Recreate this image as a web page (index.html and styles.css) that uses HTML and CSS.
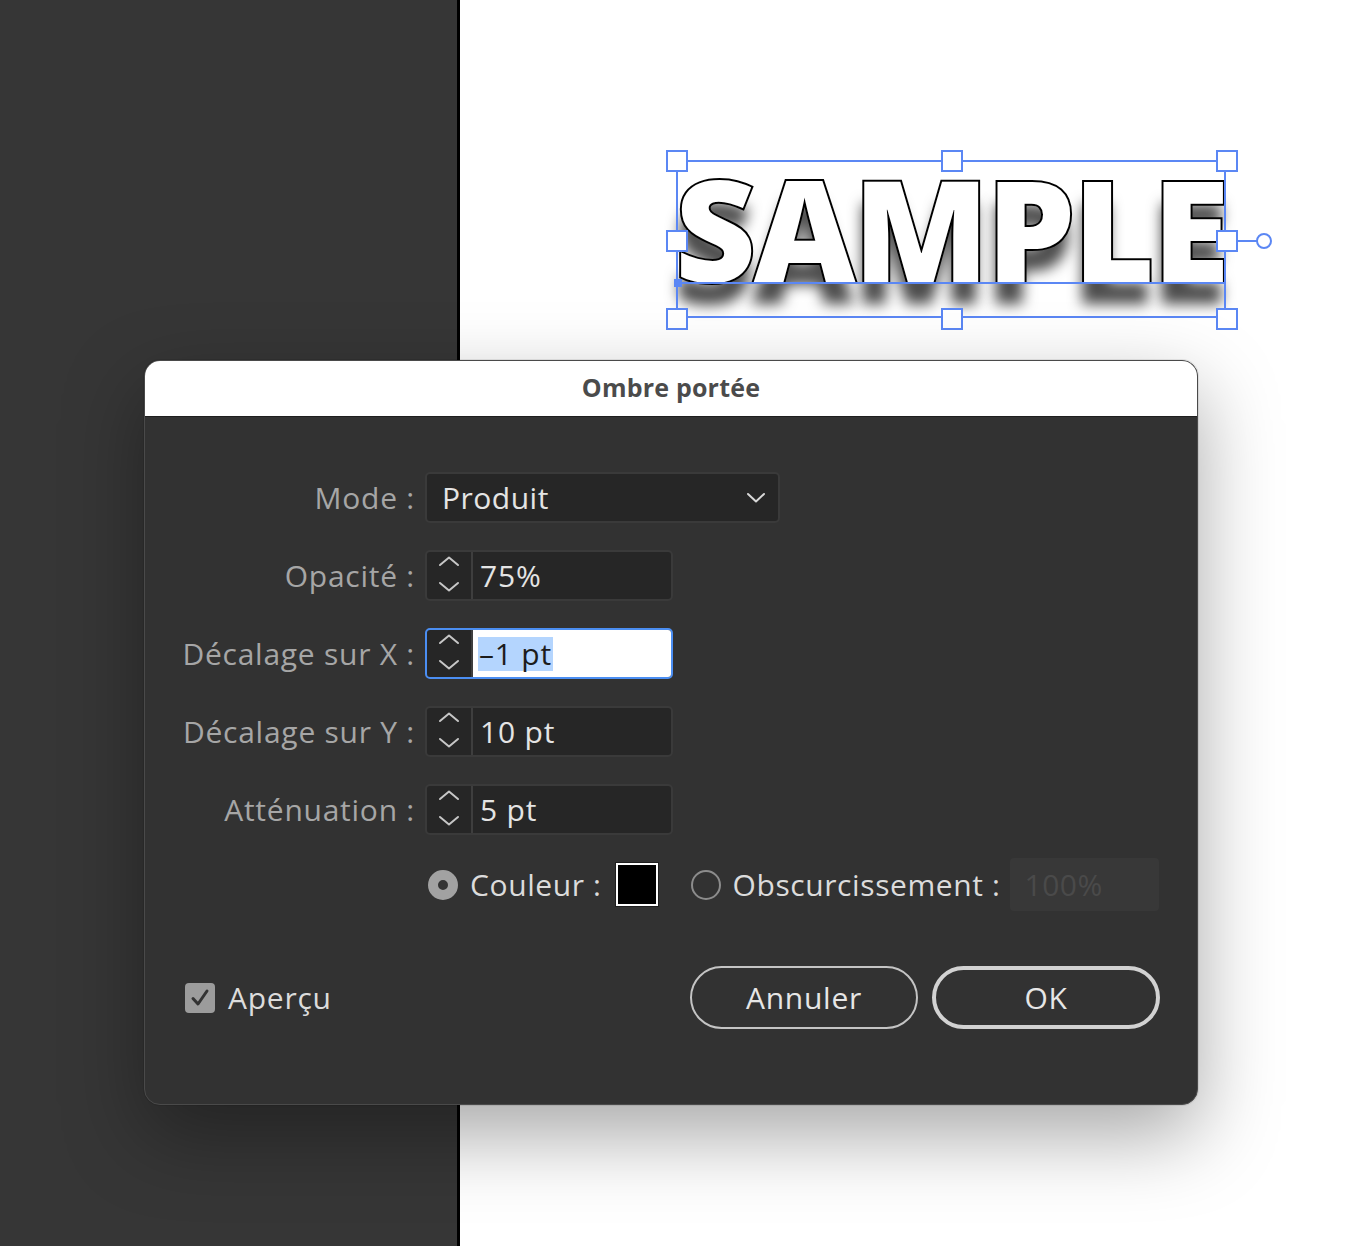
FILE: index.html
```html
<!DOCTYPE html>
<html lang="fr">
<head>
    <meta charset="UTF-8">
    <meta name="viewport" content="width=device-width, initial-scale=1.0">
    <title>Ombre portée</title>
    <link rel="stylesheet" href="styles.css">
</head>
<body>
    <div class="desk">
        <div class="sidebar"></div>
        <div class="divider"></div>
        <div class="artboard"></div>
    </div>

    <!-- Selected text object on the artboard -->
    <div class="sample">SAMPLE</div>
    <div class="selection">
        <span class="baseline"></span>
        <span class="anchor"></span>
        <span class="rotate-line"></span>
        <span class="rotate-knob"></span>
        <span class="handle tl"></span>
        <span class="handle tc"></span>
        <span class="handle tr"></span>
        <span class="handle ml"></span>
        <span class="handle mr"></span>
        <span class="handle bl"></span>
        <span class="handle bc"></span>
        <span class="handle br"></span>
    </div>

    <!-- Drop shadow dialog -->
    <div class="dialog">
        <div class="dialog-title">Ombre portée</div>
        <div class="dialog-body">
            <div class="form">
                <div class="label">Mode :</div>
                <div class="select">
                    <span>Produit</span>
                    <svg width="20" height="12" viewBox="0 0 20 12"><path d="M2 2 L10 9.5 L18 2" fill="none" stroke="#d8d8d8" stroke-width="2" stroke-linecap="round" stroke-linejoin="round"/></svg>
                </div>

                <div class="label">Opacité :</div>
                <div class="spin">
                    <div class="stepper">
                        <svg width="44" height="51" viewBox="0 0 44 51"><path d="M13 16 L22 8.5 L31 16" fill="none" stroke="#c6c6c6" stroke-width="2" stroke-linecap="round" stroke-linejoin="round"/><path d="M13 34 L22 41.5 L31 34" fill="none" stroke="#c6c6c6" stroke-width="2" stroke-linecap="round" stroke-linejoin="round"/></svg>
                    </div>
                    <div class="value">75%</div>
                </div>

                <div class="label">Décalage sur X :</div>
                <div class="spin focused">
                    <div class="stepper">
                        <svg width="44" height="51" viewBox="0 0 44 51"><path d="M13 16 L22 8.5 L31 16" fill="none" stroke="#c6c6c6" stroke-width="2" stroke-linecap="round" stroke-linejoin="round"/><path d="M13 34 L22 41.5 L31 34" fill="none" stroke="#c6c6c6" stroke-width="2" stroke-linecap="round" stroke-linejoin="round"/></svg>
                    </div>
                    <div class="value"><span class="selected">–1 pt</span></div>
                </div>

                <div class="label">Décalage sur Y :</div>
                <div class="spin">
                    <div class="stepper">
                        <svg width="44" height="51" viewBox="0 0 44 51"><path d="M13 16 L22 8.5 L31 16" fill="none" stroke="#c6c6c6" stroke-width="2" stroke-linecap="round" stroke-linejoin="round"/><path d="M13 34 L22 41.5 L31 34" fill="none" stroke="#c6c6c6" stroke-width="2" stroke-linecap="round" stroke-linejoin="round"/></svg>
                    </div>
                    <div class="value">10 pt</div>
                </div>

                <div class="label">Atténuation :</div>
                <div class="spin">
                    <div class="stepper">
                        <svg width="44" height="51" viewBox="0 0 44 51"><path d="M13 16 L22 8.5 L31 16" fill="none" stroke="#c6c6c6" stroke-width="2" stroke-linecap="round" stroke-linejoin="round"/><path d="M13 34 L22 41.5 L31 34" fill="none" stroke="#c6c6c6" stroke-width="2" stroke-linecap="round" stroke-linejoin="round"/></svg>
                    </div>
                    <div class="value">5 pt</div>
                </div>

                <div></div>
                <div class="colour-row">
                    <span class="radio checked"></span>
                    <span class="option">Couleur :</span>
                    <span class="swatch"></span>
                    <span class="radio second"></span>
                    <span class="option">Obscurcissement :</span>
                    <div class="disabled-field">100%</div>
                </div>
            </div>

            <div class="footer">
                <div class="preview">
                    <span class="checkbox">
                        <svg width="30" height="30" viewBox="0 0 30 30"><path d="M8 15.5 L13 21 L22 8" fill="none" stroke="#333" stroke-width="3" stroke-linecap="round" stroke-linejoin="round"/></svg>
                    </span>
                    <span>Aperçu</span>
                </div>
                <div class="buttons">
                    <button class="btn">Annuler</button>
                    <button class="btn default">OK</button>
                </div>
            </div>
        </div>
    </div>
</body>
</html>
```

FILE: styles.css
```css
body {
    margin: 0;
    width: 1366px;
    height: 1246px;
    overflow: hidden;
    position: relative;
    font-family: 'Open Sans', 'Noto Sans', sans-serif;
    background-color: #ffffff;
}

.desk {
    display: grid;
    grid-template-columns: 457px 3px 1fr;
    height: 1246px;
}

.sidebar {
    background-color: #363636;
}

.divider {
    background-color: #000000;
}

.artboard {
    background-color: #ffffff;
}

/* Artboard object */
.sample {
    position: absolute;
    left: 675px;
    top: 158px;
    font-size: 140px;
    line-height: 1;
    font-weight: 800;
    letter-spacing: -2px;
    color: #ffffff;
    -webkit-text-stroke: 4px #000000;
    paint-order: stroke fill;
    text-shadow: -2px 22px 14px rgba(0, 0, 0, 0.7);
}

.selection {
    position: absolute;
    left: 676px;
    top: 160px;
    width: 550px;
    height: 158px;
    border: 2px solid #5b87f4;
    box-sizing: border-box;
}

.handle {
    position: absolute;
    width: 22px;
    height: 22px;
    box-sizing: border-box;
    border: 2px solid #5b87f4;
    background-color: #ffffff;
    margin: -11px 0 0 -11px;
}

.tl { left: -1px; top: -1px; }
.tc { left: 274px; top: -1px; }
.tr { left: 549px; top: -1px; }
.ml { left: -1px; top: 79px; }
.mr { left: 549px; top: 79px; }
.bl { left: -1px; top: 157px; }
.bc { left: 274px; top: 157px; }
.br { left: 549px; top: 157px; }

.baseline {
    position: absolute;
    left: 0;
    right: 0;
    top: 120px;
    height: 2px;
    background-color: #5b87f4;
}

.anchor {
    position: absolute;
    left: -4px;
    top: 117px;
    width: 8px;
    height: 8px;
    background-color: #5b87f4;
}

.rotate-line {
    position: absolute;
    left: 550px;
    top: 78px;
    width: 30px;
    height: 2px;
    background-color: #5b87f4;
}

.rotate-knob {
    position: absolute;
    left: 578px;
    top: 71px;
    width: 16px;
    height: 16px;
    box-sizing: border-box;
    border: 2px solid #5b87f4;
    border-radius: 50%;
    background-color: #ffffff;
}

/* Dialog */
.dialog {
    position: absolute;
    left: 144px;
    top: 360px;
    width: 1054px;
    height: 745px;
    box-sizing: border-box;
    border-radius: 16px;
    overflow: hidden;
    background-color: #323232;
    border: 1px solid #4a4a4a;
    box-shadow: 0 30px 80px rgba(0, 0, 0, 0.35), 0 0 0 1px rgba(0, 0, 0, 0.08);
}

.dialog-title {
    height: 55px;
    background-color: #ffffff;
    border-bottom: 1px solid #1f1f1f;
    color: #4b4b4b;
    font-size: 25px;
    font-weight: 700;
    text-align: center;
    line-height: 53px;
    letter-spacing: 0.2px;
}

.dialog-body {
    padding: 55px 37px 0 37px;
}

.form {
    display: grid;
    grid-template-columns: 233px 1fr;
    column-gap: 10px;
    row-gap: 27px;
    align-items: center;
}

.label {
    text-align: right;
    color: #a6a6a6;
    font-size: 30px;
    letter-spacing: 0.75px;
    white-space: nowrap;
}

.select {
    width: 355px;
    height: 51px;
    box-sizing: border-box;
    background-color: #262626;
    border: 2px solid #3a3a3a;
    border-radius: 5px;
    display: flex;
    align-items: center;
    justify-content: space-between;
    padding: 0 12px 0 15px;
    color: #e4e4e4;
    font-size: 30px;
    letter-spacing: 0.5px;
}

.spin {
    width: 248px;
    height: 51px;
    box-sizing: border-box;
    background-color: #262626;
    border: 2px solid #3a3a3a;
    border-radius: 5px;
    display: flex;
    overflow: hidden;
}

.stepper {
    width: 44px;
    flex: none;
    border-right: 2px solid #3e3e3e;
    display: flex;
    align-items: center;
    justify-content: center;
}

.stepper svg {
    display: block;
    margin-top: -2px;
}

.value {
    flex: 1;
    display: flex;
    align-items: center;
    padding-left: 7px;
    color: #e4e4e4;
    font-size: 30px;
    letter-spacing: 0.8px;
}

.spin.focused {
    border-color: #4b8ef2;
}

.spin.focused .value {
    background-color: #ffffff;
    padding-left: 5px;
    color: #1c1c1c;
}

.selected {
    background-color: #b4d5fe;
    padding: 0 1px;
    line-height: 34px;
}

.colour-row {
    display: flex;
    align-items: center;
    height: 53px;
    margin-top: -4px;
}

.radio {
    width: 30px;
    height: 30px;
    box-sizing: border-box;
    border-radius: 50%;
    border: 2px solid #8c8c8c;
    margin-left: 3px;
    margin-right: 12px;
    flex: none;
}

.radio.checked {
    border: 10px solid #a2a2a2;
    background-color: #333333;
}

.radio.second {
    margin-left: 33px;
}

.option {
    color: #dcdcdc;
    font-size: 30px;
    letter-spacing: 0.6px;
    white-space: nowrap;
}

.swatch {
    width: 42px;
    height: 43px;
    box-sizing: border-box;
    margin-left: 14px;
    background-color: #000000;
    border: 2px solid #ffffff;
    box-shadow: 0 0 0 1px #1e1e1e;
    flex: none;
}

.disabled-field {
    width: 149px;
    height: 53px;
    box-sizing: border-box;
    margin-left: 10px;
    background-color: #383838;
    border-radius: 4px;
    color: #4a4a4a;
    font-size: 30px;
    padding-left: 14px;
    display: flex;
    align-items: center;
    letter-spacing: 0.5px;
}

.footer {
    display: flex;
    justify-content: space-between;
    align-items: center;
    margin-top: 55px;
    padding-left: 3px;
}

.preview {
    display: flex;
    align-items: center;
    gap: 13px;
    color: #dcdcdc;
    font-size: 30px;
    letter-spacing: 0.75px;
}

.checkbox {
    width: 30px;
    height: 30px;
    border-radius: 4px;
    background-color: #9c9c9c;
    display: block;
}

.checkbox svg {
    display: block;
}

.buttons {
    display: flex;
    gap: 14px;
}

.btn {
    width: 228px;
    height: 63px;
    box-sizing: border-box;
    border-radius: 32px;
    border: 2px solid #c4c4c4;
    background-color: transparent;
    color: #e6e6e6;
    font-family: 'Open Sans', 'Noto Sans', sans-serif;
    font-size: 30px;
    letter-spacing: 0.75px;
    cursor: pointer;
}

.btn.default {
    border: 4px solid #d2d2d2;
}
```
